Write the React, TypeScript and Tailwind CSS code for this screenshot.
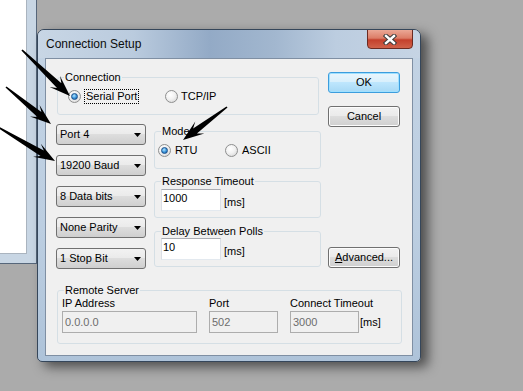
import React from "react";

const face = "font-['Liberation_Sans',Arial,sans-serif]";

function arrowPoints(x1: number, y1: number, x2: number, y2: number) {
  const dx = x2 - x1;
  const dy = y2 - y1;
  const len = Math.hypot(dx, dy);
  const ux = dx / len;
  const uy = dy / len;
  const nx = -uy;
  const ny = ux;
  const wing = 21;
  const neck = 15;
  const hw = 7.5;
  const sw = 3.2;
  const tw = 0.8;
  const wx = x2 - ux * wing;
  const wy = y2 - uy * wing;
  const kx = x2 - ux * neck;
  const ky = y2 - uy * neck;
  const pts = [
    [x1 + nx * tw, y1 + ny * tw],
    [kx + nx * sw, ky + ny * sw],
    [wx + nx * hw, wy + ny * hw],
    [x2, y2],
    [wx - nx * hw, wy - ny * hw],
    [kx - nx * sw, ky - ny * sw],
    [x1 - nx * tw, y1 - ny * tw],
  ];
  return pts.map((p) => `${p[0].toFixed(1)},${p[1].toFixed(1)}`).join(" ");
}

function Radio({ checked }: { checked?: boolean }) {
  return (
    <span className="relative flex h-[13px] w-[13px] shrink-0 items-center justify-center rounded-full border border-[#8e8f8f] bg-[radial-gradient(circle_at_40%_35%,#ffffff_0%,#f2f2f2_45%,#cfcfcf_100%)]">
      {checked && (
        <span className="h-[7px] w-[7px] rounded-full border border-[#1b4f8a] bg-[radial-gradient(circle_at_40%_35%,#b5e6ff_0%,#3f99dd_50%,#15569c_100%)]" />
      )}
    </span>
  );
}

function Group({
  label,
  className,
  children,
}: {
  label: string;
  className: string;
  children: React.ReactNode;
}) {
  return (
    <fieldset className={`rounded-[3px] border border-[#d5dfe5] ${className}`}>
      <legend className="ml-[6px] px-[1px] leading-[13px]">{label}</legend>
      {children}
    </fieldset>
  );
}

function Combo({ text }: { text: string }) {
  return (
    <div className="flex h-[21px] w-[90px] items-center justify-between rounded-[3px] border border-[#707070] bg-[linear-gradient(#f2f2f2,#ebebeb_45%,#dddddd_50%,#cfcfcf)] pl-[3px] pr-[4px]">
      <span>{text}</span>
      <svg width="7" height="4" viewBox="0 0 7 4">
        <polygon points="0,0 7,0 3.5,4" fill="#000" />
      </svg>
    </div>
  );
}

function Button({ children, def }: { children: React.ReactNode; def?: boolean }) {
  return (
    <div
      className={`flex h-[21px] w-[72px] items-center justify-center rounded-[3px] border ${
        def
          ? "border-[#3c9ddd] bg-[linear-gradient(#eaf6fd,#d9f0fc_45%,#bee6fd_50%,#a7d9f5)] shadow-[inset_0_0_0_1px_#9fe0ff]"
          : "border-[#707070] bg-[linear-gradient(#f2f2f2,#ebebeb_45%,#dddddd_50%,#cfcfcf)] shadow-[inset_0_0_0_1px_#fcfcfc]"
      }`}
    >
      {children}
    </div>
  );
}

function TextBox({ value, w }: { value: string; w: string }) {
  return (
    <div
      className={`flex h-[22px] ${w} items-start border border-[#abadb3] border-x-[#dbdfe6] border-b-[#e3e9ef] bg-white pl-[1px] pt-[2px]`}
    >
      {value}
    </div>
  );
}

function Disabled({ value, w }: { value: string; w: string }) {
  return (
    <div
      className={`flex h-[22px] ${w} items-center border border-[#adadad] bg-[#f0f0f0] pl-[2px] text-[#6d6d6d]`}
    >
      {value}
    </div>
  );
}

export default function App() {
  const arrows = [
    [22, 50, 70, 96],
    [6, 87, 51, 124],
    [-2, 127, 55, 161],
    [227, 107, 183, 140],
  ];

  return (
    <div
      className={`relative h-[391px] w-[523px] overflow-hidden bg-[#ababab] text-[11px] leading-[13px] text-black ${face}`}
    >
      {/* window behind the dialog */}
      <div className="absolute left-0 top-0 h-[264px] w-[37px] border-b border-r border-[#56667a] bg-[#c8d6e4] pb-[9px] pr-[9px]">
        <div className="h-full w-full border-b border-r border-[#aab4bf] bg-white" />
      </div>

      {/* dialog */}
      <div className="absolute left-[37px] top-[29px] flex h-[333px] w-[384px] flex-col overflow-hidden rounded-b-[5px] rounded-t-[7px] border border-[#35465a] bg-[linear-gradient(#c3d3e4,#bccee1_60%,#aec3d9)] shadow-[7px_5px_12px_rgba(0,0,0,0.55)]">
        <div className="flex h-[28px] shrink-0 items-start justify-between bg-[linear-gradient(90deg,#c8d6e5_0%,#bacbde_25%,#93aac6_45%,#a2b7cf_62%,#bccde0_78%,#c6d4e4_100%)] pl-[8px] pr-[7px]">
          <span className="pt-[7px] text-[12px] leading-[15px] text-[#0d0d0d]">Connection Setup</span>
          <div className="-mt-px flex h-[20px] w-[46px] items-center justify-center rounded-b-[4px] border border-[#6b2b22] bg-[linear-gradient(#eba896,#dc7d67_45%,#c4402c_55%,#d0624a)]">
            <svg width="14" height="11" viewBox="0 0 14 11">
              <path d="M3 2 L11 9 M11 2 L3 9" stroke="#3b3b3b" strokeWidth="4.4" strokeLinecap="square" />
              <path d="M3 2 L11 9 M11 2 L3 9" stroke="#ffffff" strokeWidth="2.4" strokeLinecap="square" />
            </svg>
          </div>
        </div>

        <div className="flex flex-1 flex-col px-[7px] pb-[5px]">
          <div className="flex flex-1 flex-col border border-[#7f8fa3] bg-[#f0f0f0] pl-[10px] pt-[12px]">
            <div className="flex">
              <div className="flex w-[265px] flex-col">
                <Group label="Connection" className="ml-px h-[44px] w-[262px]">
                  <div className="mt-[4px] flex h-[16px] items-center pl-[10px]">
                    <div className="flex w-[97px] items-center">
                      <Radio checked />
                      <span className="ml-[3px] border border-dotted border-black px-px">Serial Port</span>
                    </div>
                    <Radio />
                    <span className="ml-[3px]">TCP/IP</span>
                  </div>
                </Group>

                <div className="mt-[9px] flex">
                  <div className="flex w-[90px] flex-col gap-[10px]">
                    <Combo text="Port 4" />
                    <Combo text="19200 Baud" />
                    <Combo text="8 Data bits" />
                    <Combo text="None Parity" />
                    <Combo text="1 Stop Bit" />
                  </div>
                  <div className="ml-[8px] flex w-[167px] flex-col pt-px">
                    <Group label="Mode" className="h-[44px] w-[167px]">
                      <div className="mt-[6px] flex items-center pl-[3px]">
                        <div className="flex w-[67px] items-center">
                          <Radio checked />
                          <span className="ml-[4px]">RTU</span>
                        </div>
                        <Radio />
                        <span className="ml-[4px]">ASCII</span>
                      </div>
                    </Group>
                    <Group label="Response Timeout" className="mt-[6px] h-[43px] w-[167px]">
                      <div className="mt-px flex pl-[6px]">
                        <TextBox value="1000" w="w-[60px]" />
                        <span className="mb-[2px] ml-[3px] self-end">[ms]</span>
                      </div>
                    </Group>
                    <Group label="Delay Between Polls" className="mt-[7px] h-[42px] w-[167px]">
                      <div className="flex pl-[6px]">
                        <TextBox value="10" w="w-[60px]" />
                        <span className="mb-[2px] ml-[3px] self-end">[ms]</span>
                      </div>
                    </Group>
                  </div>
                </div>
              </div>

              <div className="ml-[7px] flex w-[72px] flex-col">
                <div className="mt-px">
                  <Button def>OK</Button>
                </div>
                <div className="mt-[13px]">
                  <Button>Cancel</Button>
                </div>
                <div className="mt-[120px]">
                  <Button>
                    <span>
                      <span className="underline">A</span>dvanced...
                    </span>
                  </Button>
                </div>
              </div>
            </div>

            <Group label="Remote Server" className="ml-px mt-[15px] h-[60px] w-[345px]">
              <div className="flex pl-[4px]">
                <div className="flex w-[147px] flex-col">
                  <span>IP Address</span>
                  <div className="mt-px">
                    <Disabled value="0.0.0.0" w="w-[135px]" />
                  </div>
                </div>
                <div className="flex w-[81px] flex-col">
                  <span>Port</span>
                  <div className="mt-px">
                    <Disabled value="502" w="w-[69px]" />
                  </div>
                </div>
                <div className="flex flex-col">
                  <span>Connect Timeout</span>
                  <div className="mt-px flex">
                    <Disabled value="3000" w="w-[69px]" />
                    <span className="mb-[4px] ml-px self-end">[ms]</span>
                  </div>
                </div>
              </div>
            </Group>
          </div>
        </div>
      </div>

      {/* annotation arrows */}
      <svg className="pointer-events-none absolute left-0 top-0" width="523" height="391">
        {arrows.map((a, i) => (
          <polygon key={i} points={arrowPoints(a[0], a[1], a[2], a[3])} fill="#000" />
        ))}
      </svg>
    </div>
  );
}
